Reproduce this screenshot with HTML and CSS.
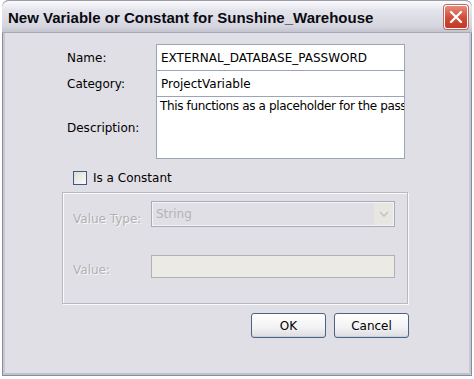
FILE: index.html
```html
<!DOCTYPE html>
<html lang="en">
<head>
  <meta charset="UTF-8" />
  <title>New Variable or Constant</title>
  <link rel="stylesheet" href="styles.css">
</head>
<body>
  <div class="window">
    <div class="titlebar">
      <span class="title">New Variable or Constant for Sunshine_Warehouse</span>
      <span class="close">
        <svg width="14" height="14" viewBox="0 0 14 14">
          <path d="M2 2 L12 12 M12 2 L2 12" stroke="#fff" stroke-width="2.4" stroke-linecap="round" />
        </svg>
      </span>
    </div>

    <div class="content">
      <div class="fields">
        <span class="label">Name:</span>
        <div class="field">EXTERNAL_DATABASE_PASSWORD</div>
        <span class="label">Category:</span>
        <div class="field">ProjectVariable</div>
        <span class="label">Description:</span>
        <div class="field desc">This functions as a placeholder for the pass</div>
      </div>

      <div class="check-row">
        <span class="checkbox"></span>
        <span>Is a Constant</span>
      </div>

      <div class="group">
        <div class="group-row">
          <span class="dim">Value Type:</span>
          <div class="select">
            <span>String</span>
            <span class="arrow">
              <svg width="10" height="6" viewBox="0 0 10 6">
                <path d="M1 1 L5 5 L9 1" fill="none" stroke="#c4c4c4" stroke-width="1.6" />
              </svg>
            </span>
          </div>
        </div>
        <div class="group-row value-row">
          <span class="dim">Value:</span>
          <div class="value-box"></div>
        </div>
      </div>

      <div class="buttons">
        <button class="btn">OK</button>
        <button class="btn">Cancel</button>
      </div>
    </div>
  </div>
</body>
</html>
```

FILE: styles.css
```css
body {
  margin: 0;
  background-color: #ffffff;
  font-family: "DejaVu Sans", "Liberation Sans", sans-serif;
  font-size: 12px;
  color: #000;
}

.window {
  width: 470px;
  height: 376px;
  margin-left: 2px;
  box-sizing: border-box;
  border: 1px solid #8a8a9c;
  border-top: none;
  border-radius: 7px 7px 0 0;
  background-color: #e0dfe5;
  box-shadow: inset 2px 0 0 #c8c8d4, inset -2px 0 0 #c8c8d4, inset 0 -2px 0 #c0c0cc;
  display: flex;
  flex-direction: column;
}

.titlebar {
  height: 33px;
  border-radius: 7px 7px 0 0;
  border-top: 1px solid #9c9cac;
  border-bottom: 1px solid #a8a8b8;
  background: linear-gradient(#fbfbfd, #e4e4ec 30%, #d6d6e0 80%, #c4c4d0);
  display: flex;
  align-items: center;
  justify-content: space-between;
  padding: 0 4px 0 6px;
  box-sizing: border-box;
  margin: 0 -1px;
}

.title {
  font-family: "Liberation Sans", sans-serif;
  font-weight: bold;
  font-size: 15px;
  color: #0a0a10;
  padding-top: 1px;
}

.close {
  width: 22px;
  height: 22px;
  border: 1px solid #ffffff;
  border-radius: 3px;
  background: linear-gradient(#e98a7a, #d04a36 55%, #c03a28);
  display: flex;
  align-items: center;
  justify-content: center;
  box-shadow: 0 0 0 1px #b86a64;
}

.content {
  flex: 1;
  padding: 11px 0 0 0;
}

.fields {
  display: grid;
  grid-template-columns: 89px 249px;
  grid-template-rows: 27px 26px 62px;
  margin-left: 64px;
}

.label {
  display: flex;
  align-items: center;
}

.field {
  border: 1px solid #9aa6b8;
  background-color: #fff;
  padding: 0 4px;
  display: flex;
  align-items: center;
  white-space: nowrap;
  overflow: hidden;
  margin-top: -1px;
}

.field:first-of-type {
  margin-top: 0;
}

.field.desc {
  align-items: flex-start;
  padding: 2px 1px 0 3px;
  letter-spacing: -0.35px;
}

.check-row {
  display: flex;
  align-items: center;
  gap: 6px;
  margin: 11px 0 0 70px;
  height: 15px;
}

.checkbox {
  width: 12px;
  height: 12px;
  border: 1px solid #3c5a84;
  background: linear-gradient(135deg, #dcdcd6, #fbfbf9);
}

.group {
  margin: 7px 0 0 59px;
  width: 346px;
  height: 112px;
  box-sizing: border-box;
  border: 1px solid #b8b8c0;
  box-shadow: inset 1px 1px 0 #fafafa, 1px 1px 0 #fafafa;
  padding: 8px 0 0 10px;
}

.group-row {
  display: flex;
  align-items: flex-end;
  height: 26px;
}

.value-row {
  margin-top: 28px;
  height: 23px;
}

.dim {
  width: 78px;
  color: #b0b0b4;
  text-shadow: 1px 1px 0 #f8f8f8;
  padding-bottom: 1px;
}

.select {
  width: 244px;
  height: 26px;
  box-sizing: border-box;
  border: 1px solid #a4acbc;
  box-shadow: inset 0 0 0 1px #f4f4f6;
  display: flex;
  align-items: center;
  justify-content: space-between;
  padding-left: 4px;
  color: #b4b4b8;
}

.arrow {
  width: 19px;
  height: 22px;
  margin-right: 1px;
  background-color: #e8e6e0;
  display: flex;
  align-items: center;
  justify-content: center;
}

.value-box {
  width: 244px;
  height: 23px;
  box-sizing: border-box;
  border: 1px solid #b0b0b4;
  background-color: #ebeae5;
}

.buttons {
  display: flex;
  gap: 8px;
  margin: 9px 0 0 248px;
}

.btn {
  width: 75px;
  height: 25px;
  font-family: "DejaVu Sans", "Liberation Sans", sans-serif;
  font-size: 12px;
  color: #000;
  border: 1px solid #4c6484;
  border-radius: 3px;
  background: linear-gradient(#ffffff, #f2f2f4 60%, #dcdce2);
  box-shadow: inset 0 -1px 0 #c8d0dc;
  padding: 0;
}
```
